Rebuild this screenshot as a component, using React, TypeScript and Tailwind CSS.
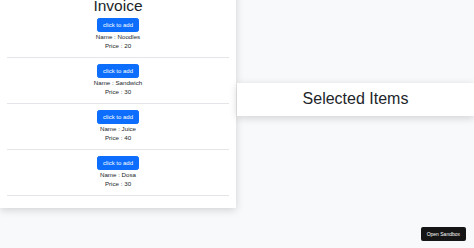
import React from "react";

type Item = { name: string; price: number };

const items: Item[] = [
  { name: "Noodles", price: 20 },
  { name: "Sandwich", price: 30 },
  { name: "Juice", price: 40 },
  { name: "Dosa", price: 30 },
];

function ItemRow({ item }: { item: Item }) {
  return (
    <div className="flex flex-col items-center">
      <button className="h-[14px] px-[4.5px] rounded-[2.25px] border border-[#0d6efd] bg-[#0d6efd] text-white text-[6px] leading-[9px]">
        click to add
      </button>
      <p className="text-[6.2px] leading-[9px] h-[9px]">Name : {item.name}</p>
      <p className="text-[6.2px] leading-[9px] h-[9px]">Price : {item.price}</p>
      <hr className="w-full mt-[7px] mb-[6px] border-0 border-t border-[#e3e5e8]" />
    </div>
  );
}

export default function App() {
  return (
    <div className="relative min-h-[248px] overflow-hidden bg-[#f8f9fa] text-[#212529] font-['Liberation_Sans',Arial,sans-serif]">
      <div className="flex items-center mt-[-10px]">
        <div className="w-[236px] bg-white px-[7px] pt-[7.4px] pb-[6px] shadow-[0_2px_8px_rgba(0,0,0,0.16)]">
          <h1 className="text-[15.5px] leading-[1.2] text-center mb-[2.2px]">Invoice</h1>
          {items.map((item) => (
            <ItemRow key={item.name} item={item} />
          ))}
        </div>
        <div className="flex-1 ml-[1px] h-[33px] bg-white flex items-center justify-center shadow-[0_2px_8px_rgba(0,0,0,0.16)]">
          <h1 className="text-[16px] leading-[1.2] mt-[-1px]">Selected Items</h1>
        </div>
      </div>
      <button className="absolute right-[8px] bottom-[7px] h-[14px] px-[6px] rounded-[2px] bg-[#151515] text-white text-[5px] leading-[14px]">
        Open Sandbox
      </button>
    </div>
  );
}
